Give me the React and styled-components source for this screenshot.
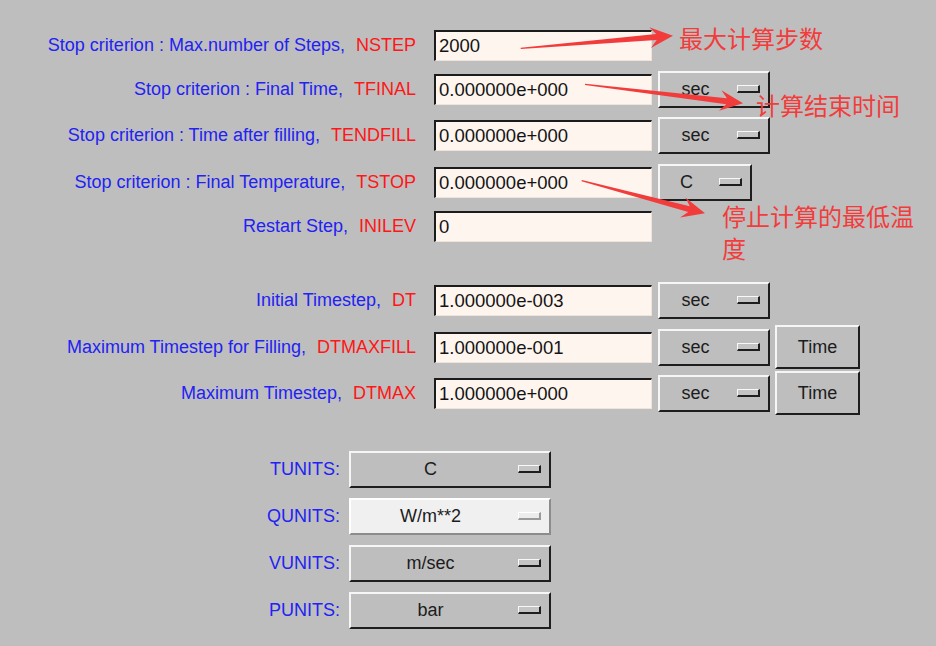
import React from "react";
import styled, { createGlobalStyle } from "styled-components";

const Global = createGlobalStyle`
  html, body {
    margin: 0;
    padding: 0;
    background: #bebebe;
  }
  body {
    font-family: "Liberation Sans", Arial, sans-serif;
  }
`;

const Page = styled.div`
  position: relative;
  width: 936px;
  height: 646px;
  overflow: hidden;
  background: #bebebe;
  padding-top: 26px;
  box-sizing: border-box;
`;

const Section = styled.div`
  display: flex;
  flex-direction: column;
  margin-top: ${(p) => p.$mt || 0}px;
`;

const Row = styled.div`
  display: flex;
  align-items: center;
  height: 38px;
  margin-top: ${(p) => p.$mt || 0}px;
`;

const LabelCell = styled.div`
  width: ${(p) => p.$w}px;
  flex-shrink: 0;
  text-align: right;
  white-space: nowrap;
  font-size: 18px;
  margin-right: ${(p) => p.$gap}px;
`;

const Blue = styled.span`
  color: #2222f4;
`;

const Red = styled.span`
  color: #ff1616;
  margin-left: 11px;
`;

const TextField = styled.input`
  box-sizing: border-box;
  width: 218px;
  height: 31px;
  margin: 0;
  padding: 0 0 0 3px;
  background: #fff5ef;
  border-style: solid;
  border-width: 2px 1px 1px 2px;
  border-color: #1c1c1c #efe4da #efe4da #1c1c1c;
  font-family: "Liberation Sans", Arial, sans-serif;
  font-size: 18.5px;
  color: #141414;
  outline: none;
  flex-shrink: 0;
`;

const OptionMenu = styled.div`
  box-sizing: border-box;
  display: flex;
  align-items: center;
  width: ${(p) => p.$w}px;
  height: 37px;
  margin-left: ${(p) => p.$ml || 0}px;
  background: ${(p) => (p.$active ? "#f0f0f0" : "#bebebe")};
  border-style: solid;
  border-width: 2px;
  border-color: ${(p) =>
    p.$active
      ? "#ffffff #8c8c8c #8c8c8c #ffffff"
      : "#f6f6f6 #1e1e1e #1e1e1e #f6f6f6"};
  flex-shrink: 0;
`;

const MenuLabel = styled.span`
  flex: 1;
  text-align: center;
  font-size: 18px;
  color: #1c1c1c;
  padding-right: ${(p) => p.$pr || 6}px;
`;

const Indicator = styled.span`
  box-sizing: border-box;
  width: 23px;
  height: 8px;
  margin-right: 8px;
  background: ${(p) => (p.$active ? "#ececec" : "#c4c4c4")};
  border-style: solid;
  border-width: 1px 2px 2px 1px;
  border-color: ${(p) =>
    p.$active
      ? "#ffffff #9a9a9a #9a9a9a #ffffff"
      : "#f8f8f8 #1e1e1e #1e1e1e #f8f8f8"};
`;

const PushButton = styled.div`
  box-sizing: border-box;
  display: flex;
  align-items: center;
  justify-content: center;
  width: 85px;
  height: 44px;
  margin-left: 5px;
  background: #bebebe;
  border-style: solid;
  border-width: 2px;
  border-color: #f6f6f6 #1e1e1e #1e1e1e #f6f6f6;
  font-size: 18px;
  color: #1c1c1c;
  flex-shrink: 0;
`;

const ArrowLayer = styled.svg`
  position: absolute;
  left: 0;
  top: 0;
  pointer-events: none;
`;

const Note = styled.div`
  position: absolute;
  left: ${(p) => p.$x}px;
  top: ${(p) => p.$y}px;
  width: ${(p) => p.$w || 240}px;
  font-family: "Noto Sans CJK SC", "Noto Sans", sans-serif;
  font-size: 24px;
  line-height: 32px;
  color: #f23c3c;
`;

function arrowPoints(x1, y1, x2, y2) {
  const L = 23;
  const W = 10.3;
  const w = 3;
  const dx = x2 - x1;
  const dy = y2 - y1;
  const len = Math.hypot(dx, dy);
  const ux = dx / len;
  const uy = dy / len;
  const nx = -uy;
  const ny = ux;
  const bx = x2 - ux * L;
  const by = y2 - uy * L;
  const kx = x2 - ux * L * 0.72;
  const ky = y2 - uy * L * 0.72;
  const pts = [
    [x1 + nx * 0.6, y1 + ny * 0.6],
    [kx + nx * w, ky + ny * w],
    [bx + nx * W, by + ny * W],
    [x2, y2],
    [bx - nx * W, by - ny * W],
    [kx - nx * w, ky - ny * w],
    [x1 - nx * 0.6, y1 - ny * 0.6],
  ];
  return pts.map((p) => p.map((v) => v.toFixed(1)).join(",")).join(" ");
}

const arrows = [
  [520.7, 48.3, 673, 35.7],
  [585, 84.3, 743, 103.3],
  [581.7, 180.7, 705, 213.3],
];

function Menu({ value, w, active, pr, ml }) {
  return (
    <OptionMenu $w={w} $active={active} $ml={ml}>
      <MenuLabel $pr={pr}>{value}</MenuLabel>
      <Indicator $active={active} />
    </OptionMenu>
  );
}

function ParamRow({ mt, label, name, value, unit, unitW, time }) {
  return (
    <Row $mt={mt}>
      <LabelCell $w={416} $gap={18}>
        <Blue>{label}</Blue>
        <Red>{name}</Red>
      </LabelCell>
      <TextField readOnly value={value} />
      {unit && <Menu value={unit} w={unitW || 112} ml={6} />}
      {time && <PushButton>Time</PushButton>}
    </Row>
  );
}

function UnitRow({ mt, label, value, active }) {
  return (
    <Row $mt={mt}>
      <LabelCell $w={340} $gap={9}>
        <Blue>{label}</Blue>
      </LabelCell>
      <Menu value={value} w={202} active={active} pr={8} />
    </Row>
  );
}

export default function App() {
  return (
    <>
      <Global />
      <Page>
        <Section>
          <ParamRow
            label="Stop criterion : Max.number of Steps,"
            name="NSTEP"
            value="2000"
          />
          <ParamRow
            mt={6}
            label="Stop criterion : Final Time,"
            name="TFINAL"
            value="0.000000e+000"
            unit="sec"
          />
          <ParamRow
            mt={8}
            label="Stop criterion : Time after filling,"
            name="TENDFILL"
            value="0.000000e+000"
            unit="sec"
          />
          <ParamRow
            mt={9}
            label="Stop criterion : Final Temperature,"
            name="TSTOP"
            value="0.000000e+000"
            unit="C"
            unitW={94}
          />
          <ParamRow mt={6} label="Restart Step," name="INILEV" value="0" />
        </Section>

        <Section $mt={36}>
          <ParamRow
            label="Initial Timestep,"
            name="DT"
            value="1.000000e-003"
            unit="sec"
          />
          <ParamRow
            mt={9}
            label="Maximum Timestep for Filling,"
            name="DTMAXFILL"
            value="1.000000e-001"
            unit="sec"
            time
          />
          <ParamRow
            mt={8}
            label="Maximum Timestep,"
            name="DTMAX"
            value="1.000000e+000"
            unit="sec"
            time
          />
        </Section>

        <Section $mt={38}>
          <UnitRow label="TUNITS:" value="C" />
          <UnitRow mt={9} label="QUNITS:" value="W/m**2" active />
          <UnitRow mt={9} label="VUNITS:" value="m/sec" />
          <UnitRow mt={9} label="PUNITS:" value="bar" />
        </Section>

        <ArrowLayer width="936" height="646" viewBox="0 0 936 646">
          {arrows.map((a, i) => (
            <polygon key={i} points={arrowPoints(...a)} fill="#f23c3c" />
          ))}
        </ArrowLayer>
        <Note $x={679} $y={22}>最大计算步数</Note>
        <Note $x={756} $y={89}>计算结束时间</Note>
        <Note $x={722} $y={200} $w={200}>
          停止计算的最低温度
        </Note>
      </Page>
    </>
  );
}
